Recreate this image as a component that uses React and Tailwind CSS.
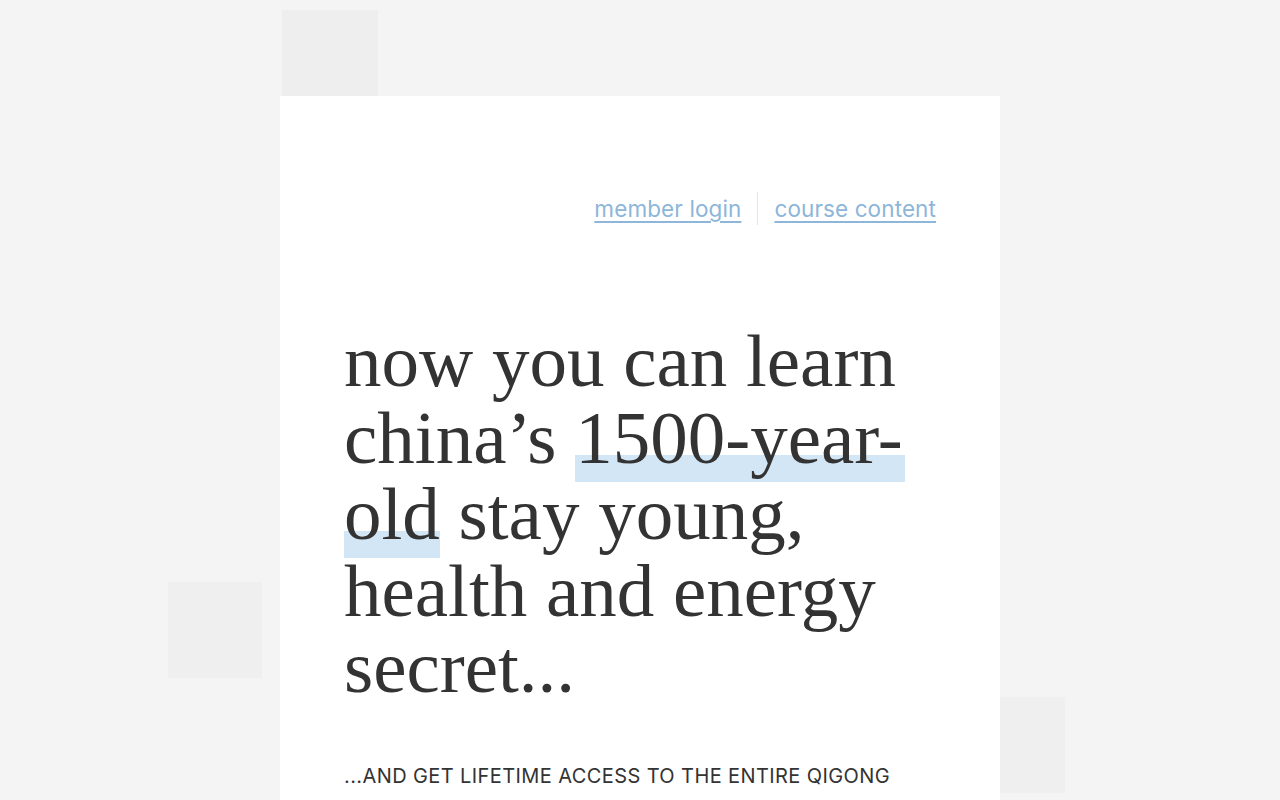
export default function App() {
  return (
    <div className="relative min-h-[800px] w-full overflow-hidden bg-[#f4f4f4]">
      <div className="absolute left-[282px] top-[10px] h-[96px] w-[96px] bg-[#eeeeee]" />
      <div className="absolute left-[168px] top-[582px] h-[96px] w-[94px] bg-[#efefef]" />
      <div className="absolute left-[969px] top-[697px] h-[96px] w-[96px] bg-[#efefef]" />
      <div className="relative mx-auto mt-[96px] w-[720px] bg-white px-[64px] pt-[96px] pb-[80px]">
        <nav className="flex items-center justify-end font-['Inter',sans-serif] text-[22.5px] leading-[33px] tracking-[0.005em] text-[#8db6d9]">
          <a href="#" className="underline decoration-[1.5px] underline-offset-[4px]">member login</a>
          <span className="mx-[16px] h-[33px] w-px bg-[#e6e6e6]" />
          <a href="#" className="underline decoration-[1.5px] underline-offset-[4px]">course content</a>
        </nav>
        <h1 className="mt-[98px] font-['Liberation_Serif',serif] text-[75px] leading-[76.5px] font-normal text-[#333333]">
          now you can learn
          <br />
          china’s{" "}
          <span className="bg-[linear-gradient(transparent_69%,#d3e6f6_69%)] pr-[2px] pb-[3px]">1500-year-</span>
          <br />
          <span className="bg-[linear-gradient(transparent_69%,#d3e6f6_69%)] pb-[3px]">old</span> stay young,
          <br />
          health and energy
          <br />
          secret...
        </h1>
        <p className="mt-[55px] font-['Inter',sans-serif] text-[20px] leading-[30px] tracking-[0.02em] text-[#333333] uppercase">
          ...and get lifetime access to the entire qigong
        </p>
      </div>
    </div>
  );
}
